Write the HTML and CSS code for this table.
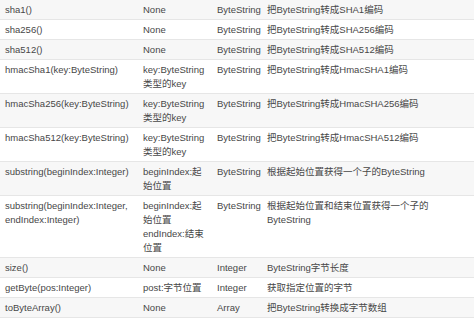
FILE: index.html
```html
<!DOCTYPE html>
<html lang="zh">
<head>
<meta charset="utf-8">
<link rel="stylesheet" href="styles.css">
</head>
<body>
<table class="api">
  <colgroup>
    <col class="c-name">
    <col class="c-param">
    <col class="c-ret">
    <col class="c-desc">
  </colgroup>
  <tbody>
    <tr><td>sha1()</td><td>None</td><td class="nw">ByteString</td><td>把ByteString转成SHA1编码</td></tr>
    <tr><td>sha256()</td><td>None</td><td class="nw">ByteString</td><td>把ByteString转成SHA256编码</td></tr>
    <tr><td>sha512()</td><td>None</td><td class="nw">ByteString</td><td>把ByteString转成SHA512编码</td></tr>
    <tr><td>hmacSha1(key:ByteString)</td><td>key:ByteString类型的key</td><td class="nw">ByteString</td><td>把ByteString转成HmacSHA1编码</td></tr>
    <tr><td>hmacSha256(key:ByteString)</td><td>key:ByteString类型的key</td><td class="nw">ByteString</td><td>把ByteString转成HmacSHA256编码</td></tr>
    <tr><td>hmacSha512(key:ByteString)</td><td>key:ByteString类型的key</td><td class="nw">ByteString</td><td>把ByteString转成HmacSHA512编码</td></tr>
    <tr><td>substring(beginIndex:Integer)</td><td>beginIndex:起始位置</td><td class="nw">ByteString</td><td>根据起始位置获得一个子的ByteString</td></tr>
    <tr><td>substring(beginIndex:Integer, endIndex:Integer)</td><td>beginIndex:起始位置<br>endIndex:结束位置</td><td class="nw">ByteString</td><td>根据起始位置和结束位置获得一个子的<br>ByteString</td></tr>
    <tr><td>size()</td><td>None</td><td class="nw">Integer</td><td>ByteString字节长度</td></tr>
    <tr><td>getByte(pos:Integer)</td><td>post:字节位置</td><td class="nw">Integer</td><td>获取指定位置的字节</td></tr>
    <tr><td>toByteArray()</td><td>None</td><td class="nw">Array</td><td>把ByteString转换成字节数组</td></tr>
  </tbody>
</table>
</body>
</html>
```
FILE: styles.css
```css
html, body {
  margin: 0;
  padding: 0;
  background: #ffffff;
}

.api {
  width: 474px;
  table-layout: fixed;
  border-collapse: collapse;
  border-spacing: 0;
  font-family: "Liberation Sans", Arial, "Noto Sans CJK SC", sans-serif;
  font-size: 9.5px;
  line-height: 14px;
  color: #474747;
}

.c-name { width: 138px; }
.c-param { width: 74px; }
.c-ret { width: 50px; }
.c-desc { width: 212px; }

.api td {
  padding: 3px 5px 2px 5px;
  vertical-align: top;
  border-bottom: 1px solid #e6e6e6;
  overflow-wrap: anywhere;
}

.api td.nw {
  white-space: nowrap;
}

.api tr:nth-child(odd) td {
  background: #f7f7f7;
}
```
